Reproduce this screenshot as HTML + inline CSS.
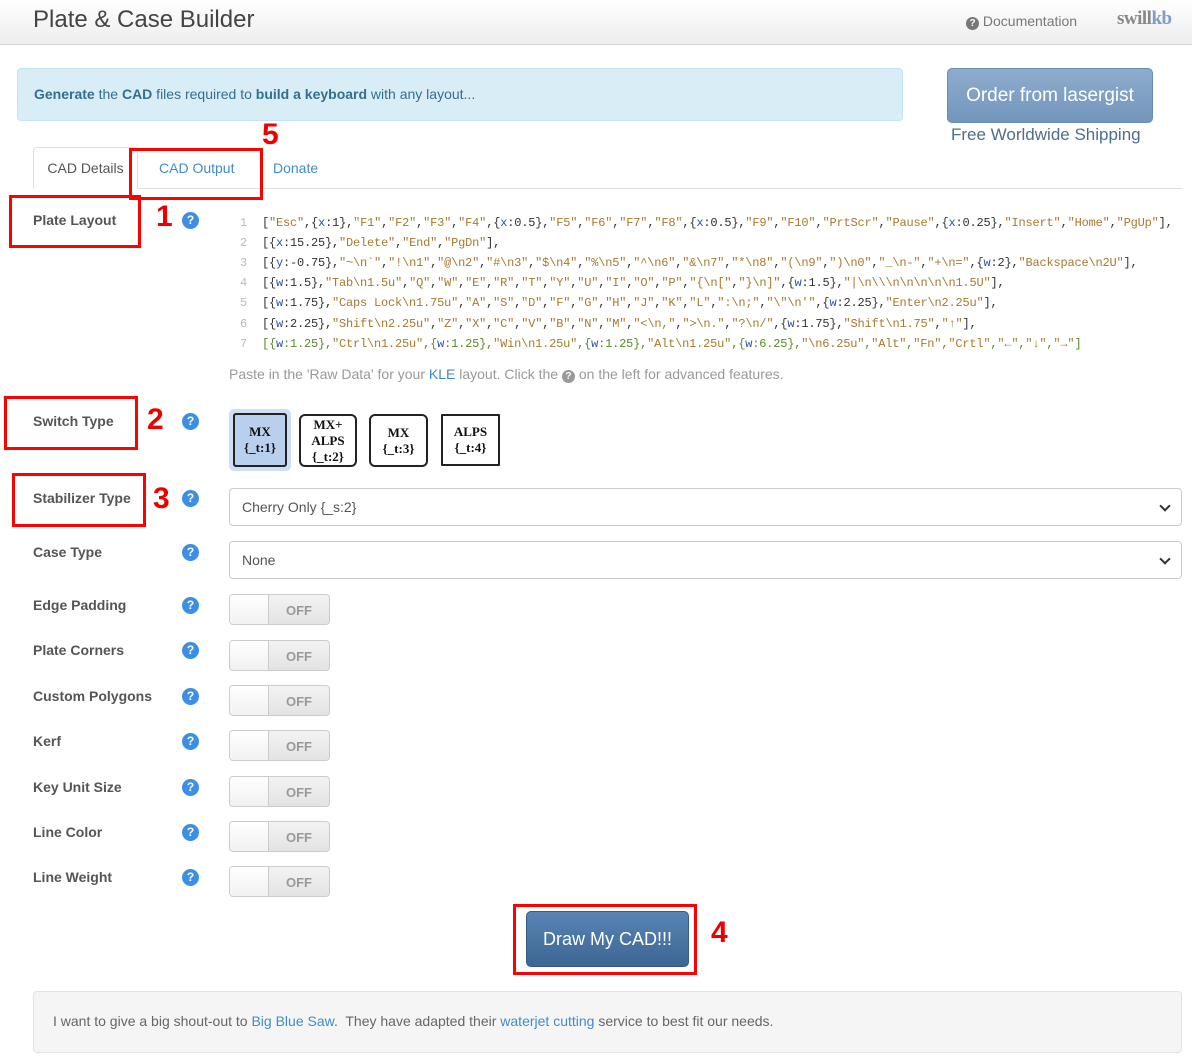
<!DOCTYPE html>
<html><head><meta charset="utf-8"><style>
*{box-sizing:border-box;margin:0;padding:0}
body{width:1192px;height:1060px;position:relative;background:#fff;font-family:"Liberation Sans",sans-serif;color:#555;overflow:hidden}
.a{position:absolute}
.nav{left:0;top:0;width:1192px;height:45px;background:linear-gradient(#fff,#ededed);border-bottom:1px solid #d4d4d4}
.red{position:absolute;border:3px solid #f00}
.num{position:absolute;color:#e00;font-weight:bold;font-size:30px;font-family:"Liberation Sans",sans-serif}
.lbl{position:absolute;left:33px;font-weight:bold;font-size:14px;color:#555}
.q{position:absolute;left:182px;width:17px;height:17px;border-radius:50%;background:#3d8fe4;color:#fff;font-size:12px;font-weight:bold;text-align:center;line-height:17px}
.code{position:absolute;left:240px;font-family:"Liberation Mono",monospace;font-size:12px;white-space:pre;color:#333;letter-spacing:-0.2px}
.code i{font-style:normal;color:#bbb;display:inline-block;width:22px}
.s{color:#a67a2c}.k{color:#2d4fa8}
.sw{position:absolute;border:2px solid #222;border-radius:3px;background:#fff;font-family:"Liberation Serif",serif;font-weight:bold;font-size:13px;text-align:center;color:#111;display:flex;align-items:center;justify-content:center;line-height:16px}
.sel{position:absolute;left:229px;width:953px;height:38px;border:1px solid #ccc;border-radius:4px;font-size:14px;color:#555;padding:10px 12px}
.sel:after{content:"";position:absolute;right:12px;top:13px;width:6px;height:6px;border-right:2px solid #333;border-bottom:2px solid #333;transform:rotate(45deg)}
.tg{position:absolute;left:229px;width:101px;height:31px;border:1px solid #ccc;border-radius:4px;background:linear-gradient(#f3f3f3,#e3e3e3);overflow:hidden}
.tg b{position:absolute;left:0;top:0;width:39px;height:29px;background:linear-gradient(#fff,#f1f1f1);border-right:1px solid #ccc}
.tg span{position:absolute;left:56px;top:8px;font-size:13px;font-weight:bold;color:#999}
</style></head><body>
<div class="a nav"></div>
<div class="a" style="left:33px;top:6px;font-size:24px;color:#444">Plate &amp; Case Builder</div>
<div class="a" style="left:966px;top:13px;font-size:14px;color:#777"><span style="display:inline-block;width:13px;height:13px;border-radius:50%;background:#777;color:#fff;font-size:10px;text-align:center;line-height:13px;font-weight:bold">?</span> Documentation</div>
<div class="a" style="left:1117px;top:8px;font-family:'Liberation Serif',serif;font-weight:bold;font-size:19px;color:#888;letter-spacing:-0.5px">swill<span style="color:#7a9cd0">kb</span></div>

<div class="a" style="left:17px;top:68px;width:886px;height:53px;background:#d9edf7;border:1px solid #c4e3f0;border-radius:4px;font-size:14px;color:#31708f;padding:17px 16px"><b>Generate</b> the <b>CAD</b> files required to <b>build a keyboard</b> with any layout...</div>
<div class="a" style="left:947px;top:68px;width:206px;height:55px;background:linear-gradient(#8eaccd,#7396bc);border:1px solid #6a8cb2;border-radius:5px;color:#fff;font-size:19px;text-align:center;line-height:53px">Order from lasergist</div>
<div class="a" style="left:951px;top:125px;font-size:17px;color:#4d6d8e">Free Worldwide Shipping</div>

<div class="a" style="left:33px;top:188px;width:1149px;border-top:1px solid #ddd"></div>
<div class="a" style="left:33px;top:147px;width:105px;height:42px;border:1px solid #ddd;border-bottom:1px solid #fff;border-radius:4px 4px 0 0;background:#fff;font-size:14px;color:#555;text-align:center;line-height:40px">CAD Details</div>
<div class="a" style="left:159px;top:160px;font-size:14px;color:#428bca">CAD Output</div>
<div class="a" style="left:273px;top:160px;font-size:14px;color:#428bca">Donate</div>

<div class="lbl" style="top:212px">Plate Layout</div><div class="q" style="top:212px">?</div>
<div class="code" style="top:216px"><i>1</i>[<span class="s">"Esc"</span>,{<span class="k">x</span>:1},<span class="s">"F1"</span>,<span class="s">"F2"</span>,<span class="s">"F3"</span>,<span class="s">"F4"</span>,{<span class="k">x</span>:0.5},<span class="s">"F5"</span>,<span class="s">"F6"</span>,<span class="s">"F7"</span>,<span class="s">"F8"</span>,{<span class="k">x</span>:0.5},<span class="s">"F9"</span>,<span class="s">"F10"</span>,<span class="s">"PrtScr"</span>,<span class="s">"Pause"</span>,{<span class="k">x</span>:0.25},<span class="s">"Insert"</span>,<span class="s">"Home"</span>,<span class="s">"PgUp"</span>],</div>
<div class="code" style="top:236px"><i>2</i>[{<span class="k">x</span>:15.25},<span class="s">"Delete"</span>,<span class="s">"End"</span>,<span class="s">"PgDn"</span>],</div>
<div class="code" style="top:256px"><i>3</i>[{<span class="k">y</span>:-0.75},<span class="s">"~\n`"</span>,<span class="s">"!\n1"</span>,<span class="s">"@\n2"</span>,<span class="s">"#\n3"</span>,<span class="s">"$\n4"</span>,<span class="s">"%\n5"</span>,<span class="s">"^\n6"</span>,<span class="s">"&amp;\n7"</span>,<span class="s">"*\n8"</span>,<span class="s">"(\n9"</span>,<span class="s">")\n0"</span>,<span class="s">"_\n-"</span>,<span class="s">"+\n="</span>,{<span class="k">w</span>:2},<span class="s">"Backspace\n2U"</span>],</div>
<div class="code" style="top:276px"><i>4</i>[{<span class="k">w</span>:1.5},<span class="s">"Tab\n1.5u"</span>,<span class="s">"Q"</span>,<span class="s">"W"</span>,<span class="s">"E"</span>,<span class="s">"R"</span>,<span class="s">"T"</span>,<span class="s">"Y"</span>,<span class="s">"U"</span>,<span class="s">"I"</span>,<span class="s">"O"</span>,<span class="s">"P"</span>,<span class="s">"{\n["</span>,<span class="s">"}\n]"</span>,{<span class="k">w</span>:1.5},<span class="s">"|\n\\\n\n\n\n\n1.5U"</span>],</div>
<div class="code" style="top:296px"><i>5</i>[{<span class="k">w</span>:1.75},<span class="s">"Caps Lock\n1.75u"</span>,<span class="s">"A"</span>,<span class="s">"S"</span>,<span class="s">"D"</span>,<span class="s">"F"</span>,<span class="s">"G"</span>,<span class="s">"H"</span>,<span class="s">"J"</span>,<span class="s">"K"</span>,<span class="s">"L"</span>,<span class="s">":\n;"</span>,<span class="s">"\"\n'"</span>,{<span class="k">w</span>:2.25},<span class="s">"Enter\n2.25u"</span>],</div>
<div class="code" style="top:317px"><i>6</i>[{<span class="k">w</span>:2.25},<span class="s">"Shift\n2.25u"</span>,<span class="s">"Z"</span>,<span class="s">"X"</span>,<span class="s">"C"</span>,<span class="s">"V"</span>,<span class="s">"B"</span>,<span class="s">"N"</span>,<span class="s">"M"</span>,<span class="s">"&lt;\n,"</span>,<span class="s">"&gt;\n."</span>,<span class="s">"?\n/"</span>,{<span class="k">w</span>:1.75},<span class="s">"Shift\n1.75"</span>,<span class="s">"↑"</span>],</div>
<div class="code" style="top:337px;color:#5a8a2a"><i>7</i>[{<span class="k">w</span>:1.25},<span class="s">"Ctrl\n1.25u"</span>,{<span class="k">w</span>:1.25},<span class="s">"Win\n1.25u"</span>,{<span class="k">w</span>:1.25},<span class="s">"Alt\n1.25u"</span>,{<span class="k">w</span>:6.25},<span class="s">"\n6.25u"</span>,<span class="s">"Alt"</span>,<span class="s">"Fn"</span>,<span class="s">"Crtl"</span>,<span class="s">"←"</span>,<span class="s">"↓"</span>,<span class="s">"→"</span>]</div>
<div class="a" style="left:229px;top:366px;font-size:14px;color:#999">Paste in the 'Raw Data' for your <span style="color:#428bca">KLE</span> layout. Click the <span style="display:inline-block;width:13px;height:13px;border-radius:50%;background:#999;color:#fff;font-size:10px;text-align:center;line-height:13px;font-weight:bold">?</span> on the left for advanced features.</div>

<div class="lbl" style="top:413px">Switch Type</div><div class="q" style="top:413px">?</div>
<div class="a" style="left:229px;top:409px;width:62px;height:62px;border-radius:5px;background:#cfdff3"></div>
<div class="sw" style="left:233px;top:413px;width:54px;height:54px;background:#b9cfee">MX<br>{_t:1}</div>
<div class="sw" style="left:299px;top:414px;width:58px;height:53px;border-radius:6px">MX+<br>ALPS<br>{_t:2}</div>
<div class="sw" style="left:369px;top:414px;width:59px;height:53px;border-radius:6px">MX<br>{_t:3}</div>
<div class="sw" style="left:441px;top:414px;width:59px;height:52px;border-radius:1px">ALPS<br>{_t:4}</div>

<div class="lbl" style="top:490px">Stabilizer Type</div><div class="q" style="top:490px">?</div>
<div class="sel" style="top:488px">Cherry Only {_s:2}</div>
<div class="lbl" style="top:544px">Case Type</div><div class="q" style="top:544px">?</div>
<div class="sel" style="top:541px">None</div>

<div class="lbl" style="top:597px">Edge Padding</div><div class="q" style="top:597px">?</div><div class="tg" style="top:594px"><b></b><span>OFF</span></div>
<div class="lbl" style="top:642px">Plate Corners</div><div class="q" style="top:642px">?</div><div class="tg" style="top:640px"><b></b><span>OFF</span></div>
<div class="lbl" style="top:688px">Custom Polygons</div><div class="q" style="top:688px">?</div><div class="tg" style="top:685px"><b></b><span>OFF</span></div>
<div class="lbl" style="top:733px">Kerf</div><div class="q" style="top:733px">?</div><div class="tg" style="top:730px"><b></b><span>OFF</span></div>
<div class="lbl" style="top:779px">Key Unit Size</div><div class="q" style="top:779px">?</div><div class="tg" style="top:776px"><b></b><span>OFF</span></div>
<div class="lbl" style="top:824px">Line Color</div><div class="q" style="top:824px">?</div><div class="tg" style="top:821px"><b></b><span>OFF</span></div>
<div class="lbl" style="top:869px">Line Weight</div><div class="q" style="top:869px">?</div><div class="tg" style="top:866px"><b></b><span>OFF</span></div>

<div class="a" style="left:526px;top:911px;width:163px;height:56px;border-radius:5px;background:linear-gradient(#5884b4,#3d6693);border:1px solid #345b85;color:#fff;font-size:18px;text-align:center;line-height:54px">Draw My CAD!!!</div>

<div class="a" style="left:33px;top:991px;width:1149px;height:62px;background:#f5f5f5;border:1px solid #e3e3e3;border-radius:4px;font-size:14px;color:#666;padding:21px 19px">I want to give a big shout-out to <span style="color:#428bca">Big Blue Saw</span>.&nbsp; They have adapted their <span style="color:#428bca">waterjet cutting</span> service to best fit our needs.</div>

<div class="red" style="left:9px;top:195px;width:132px;height:53px"></div><div class="num" style="left:156px;top:200px">1</div>
<div class="red" style="left:4px;top:396px;width:134px;height:54px"></div><div class="num" style="left:147px;top:403px">2</div>
<div class="red" style="left:12px;top:473px;width:134px;height:54px"></div><div class="num" style="left:153px;top:482px">3</div>
<div class="red" style="left:129px;top:148px;width:134px;height:52px"></div><div class="num" style="left:262px;top:118px">5</div>
<div class="red" style="left:513px;top:904px;width:184px;height:71px"></div><div class="num" style="left:711px;top:916px">4</div>
</body></html>
